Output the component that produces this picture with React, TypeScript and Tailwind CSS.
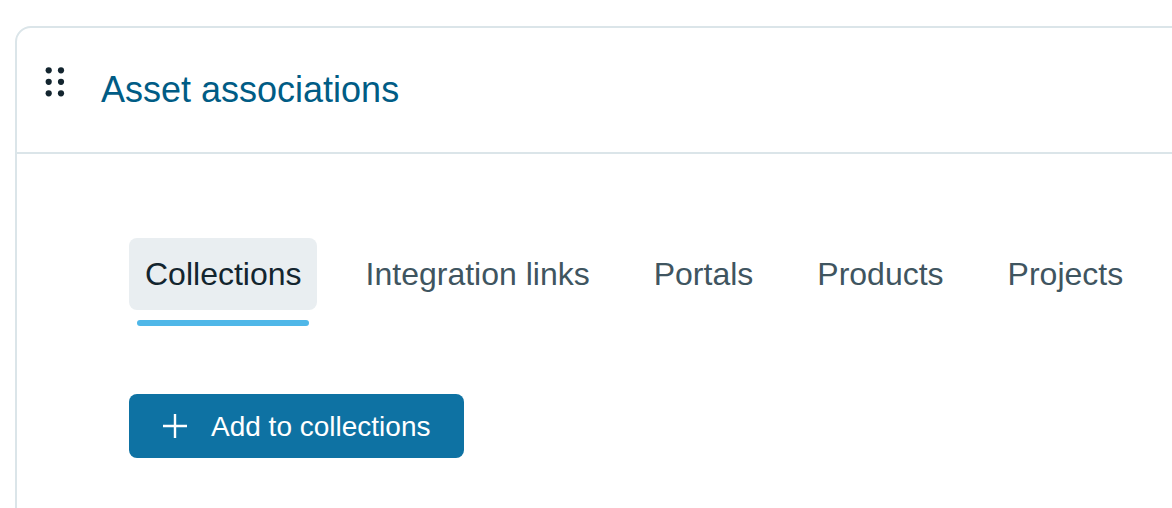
import React from "react";

const tabs = ["Integration links", "Portals", "Products", "Projects"];

function Grip() {
  return (
    <svg width="20" height="30" viewBox="0 0 20 30" className="shrink-0" fill="#13252f">
      {[0, 1, 2].map((r) =>
        [0, 1].map((c) => <circle key={`${r}${c}`} cx={3.7 + c * 12.3} cy={3.3 + r * 11.5} r="3.1" />)
      )}
    </svg>
  );
}

export default function App() {
  return (
    <div className="w-[1172px] h-[508px] overflow-hidden bg-white pt-[26px] pl-[15px] font-['Liberation_Sans',Arial,sans-serif]">
      <div className="w-[1400px] h-[600px] border-2 border-[#dbe5e9] rounded-[16px]">
        <div className="h-[126px] border-b-2 border-[#dbe5e9] flex items-start pl-[28px]">
          <div className="mt-[39px]"><Grip /></div>
          <h2 className="ml-[36px] mt-[39px] text-[36px] leading-[46px] text-[#005c85]">Asset associations</h2>
        </div>
        <div className="pl-[112px] pt-[84px]">
          <div className="flex items-start gap-[32px]">
            <div className="flex flex-col items-start w-[188.6px]">
              <div className="h-[72px] w-[188px] px-[16px] rounded-[8px] bg-[#e9eef1] flex items-center whitespace-nowrap text-[32px] text-[#13252f]">Collections</div>
              <div className="mt-[10px] ml-[8px] h-[6px] w-[172px] rounded-full bg-[#4fb7e8]"></div>
            </div>
            {tabs.map((t) => (
              <div key={t} className="h-[72px] px-[16px] flex items-center text-[32px] text-[#3f5560]">{t}</div>
            ))}
          </div>
          <button className="mt-[68px] h-[64px] w-[335px] rounded-[8px] bg-[#0e72a3] flex items-center pl-[33px] text-white text-[28px]">
            <svg width="26" height="26" viewBox="0 0 26 26" fill="none" stroke="white" strokeWidth="2.4" className="shrink-0">
              <path d="M13 1v24M1 13h24" />
            </svg>
            <span className="ml-[23px] mt-[2px]">Add to collections</span>
          </button>
        </div>
      </div>
    </div>
  );
}
